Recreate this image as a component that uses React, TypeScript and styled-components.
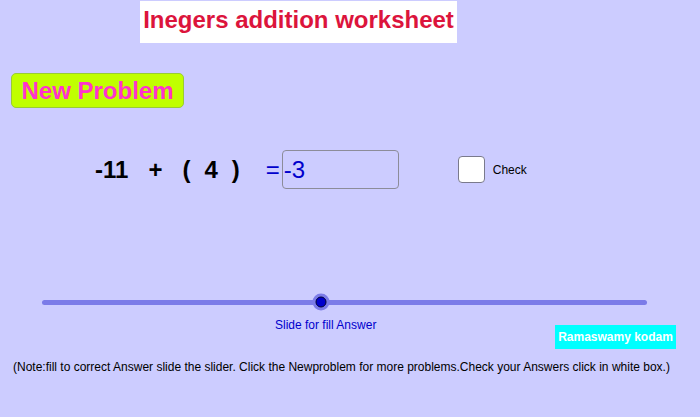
import styled, { createGlobalStyle } from 'styled-components'

const GlobalStyle = createGlobalStyle`
  html, body {
    margin: 0;
    padding: 0;
    background: #ccccff;
    font-family: 'Liberation Sans', Arial, sans-serif;
  }
`

const Page = styled.div`
  width: 700px;
  height: 417px;
  background: #ccccff;
  overflow: hidden;
  display: flex;
  flex-direction: column;
`

const TitleRow = styled.div`
  padding: 1px 0 0 140px;
`

const Title = styled.h1`
  margin: 0;
  width: 317px;
  height: 42px;
  background: #fff;
  color: #dc143c;
  font-size: 24px;
  font-weight: 700;
  display: flex;
  align-items: center;
  justify-content: center;
  box-sizing: border-box;
  padding-bottom: 4px;
`

const NewButton = styled.button`
  margin: 30px 0 0 11px;
  width: 173px;
  height: 35px;
  background: #c0ff00;
  border: 1px solid #99cc33;
  border-radius: 5px;
  color: #ff33cc;
  font-family: inherit;
  font-size: 24px;
  font-weight: 700;
  padding: 0;
  cursor: pointer;
`

const EquationRow = styled.div`
  display: flex;
  align-items: center;
  margin-top: 42px;
  height: 39px;
`

const Term = styled.span<{ $left: number }>`
  margin-left: ${(p) => p.$left}px;
  font-size: 24px;
  font-weight: 700;
  color: #000;
`

const Equals = styled.span`
  margin-left: 26px;
  font-size: 24px;
  color: #0000cc;
`

const AnswerBox = styled.div`
  margin-left: 2px;
  width: 117px;
  height: 39px;
  box-sizing: border-box;
  border: 1px solid #8c8c99;
  border-radius: 4px;
  color: #0000cc;
  font-size: 24px;
  display: flex;
  align-items: center;
  padding-left: 1px;
`

const CheckBox = styled.div`
  margin-left: 59px;
  width: 27px;
  height: 27px;
  box-sizing: border-box;
  background: #fff;
  border: 1px solid #7a7a8c;
  border-radius: 4px;
`

const CheckLabel = styled.span`
  margin-left: 8px;
  font-size: 12px;
  color: #000;
`

const SliderArea = styled.div`
  margin-top: 106px;
  padding-left: 42px;
  height: 14px;
  display: flex;
  align-items: center;
`

const Track = styled.div`
  position: relative;
  width: 605px;
  height: 5px;
  border-radius: 3px;
  background: #7b7be8;
`

const Knob = styled.div`
  position: absolute;
  top: 50%;
  width: 17px;
  height: 17px;
  border-radius: 50%;
  background: #7b7be8;
  transform: translate(-50%, -50%);
  display: flex;
  align-items: center;
  justify-content: center;

  &::after {
    content: '';
    width: 11px;
    height: 11px;
    box-sizing: border-box;
    border-radius: 50%;
    background: #0000cc;
    border: 1px solid #000033;
  }
`

const SliderLabel = styled.div`
  margin-top: 9px;
  padding-left: 275px;
  font-size: 12px;
  color: #0000cc;
`

const AuthorRow = styled.div`
  display: flex;
  justify-content: flex-end;
  padding-right: 24px;
  margin-top: -7px;
`

const Author = styled.div`
  width: 121px;
  height: 24px;
  background: #00ffff;
  color: #fff;
  font-size: 12px;
  font-weight: 700;
  display: flex;
  align-items: center;
  justify-content: center;
`

const Note = styled.p`
  margin: 11px 0 0 13px;
  font-size: 12px;
  color: #000;
`

export default function App() {
  const knob = (321 - 42) / 605
  return (
    <Page>
      <GlobalStyle />
      <TitleRow>
        <Title>Inegers addition worksheet</Title>
      </TitleRow>
      <div>
        <NewButton>New Problem</NewButton>
      </div>
      <EquationRow>
        <Term $left={95}>-11</Term>
        <Term $left={20}>+</Term>
        <Term $left={20}>(</Term>
        <Term $left={14}>4</Term>
        <Term $left={14}>)</Term>
        <Equals>=</Equals>
        <AnswerBox>-3</AnswerBox>
        <CheckBox />
        <CheckLabel>Check</CheckLabel>
      </EquationRow>
      <SliderArea>
        <Track>
          <Knob style={{ left: `${knob * 100}%` }} />
        </Track>
      </SliderArea>
      <SliderLabel>Slide for fill Answer</SliderLabel>
      <AuthorRow>
        <Author>Ramaswamy kodam</Author>
      </AuthorRow>
      <Note>
        (Note:fill to correct Answer slide the slider. Click the Newproblem for more problems.Check your Answers click in white box.)
      </Note>
    </Page>
  )
}
